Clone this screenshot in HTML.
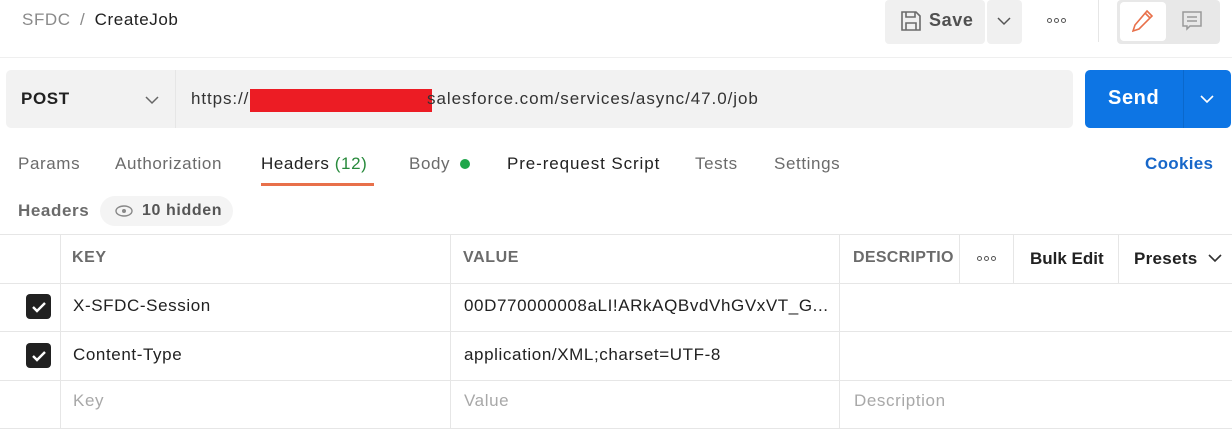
<!DOCTYPE html><html><head><style>
body{margin:0;width:1232px;height:438px;overflow:hidden;background:#fff;font-family:"Liberation Sans",sans-serif;position:relative;color:#212121}
.a{position:absolute;white-space:nowrap;letter-spacing:0.6px}
.vl{position:absolute;width:1px;background:#e6e6e6}
.hl{position:absolute;height:1px;background:#e6e6e6;left:0;width:1232px}
.cb{position:absolute;left:26px;width:25px;height:25px;background:#212121;border-radius:4px}
.dots{position:absolute;display:flex;gap:2px}
.dots i{width:5px;height:5px;border:1.3px solid #555;border-radius:50%;box-sizing:border-box}
</style></head><body>
<div class="a" style="left:22px;top:10px;font-size:17px;color:#8a8a8a">SFDC <span style="margin:0 4px">/</span> <span style="color:#212121">CreateJob</span></div>
<div class="a" style="left:885px;top:0;width:100px;height:44px;background:#f0f0f0;border-radius:4px"></div>
<svg class="a" style="left:900px;top:10px" width="22" height="22" viewBox="0 0 22 22" fill="none" stroke="#6b6b6b" stroke-width="1.6"><path d="M2 2h14l4 4v14H2z M6 2v5h9V2 M6 20v-7h10v7"/></svg>
<div class="a" style="left:929px;top:10px;font-size:18px;font-weight:bold;color:#505050">Save</div>
<div class="a" style="left:987px;top:0;width:35px;height:44px;background:#f0f0f0;border-radius:4px"></div>
<svg class="a" style="left:997px;top:16px" width="14" height="10"><path d="M1 2l6 6 6-6" fill="none" stroke="#555" stroke-width="1.5"/></svg>
<div class="dots" style="left:1047px;top:18px"><i></i><i></i><i></i></div>
<div class="vl" style="left:1098px;top:0;height:42px"></div>
<div class="a" style="left:1117px;top:0;width:103px;height:44px;background:#e8e8e8;border-radius:4px"></div>
<div class="a" style="left:1120px;top:2px;width:46px;height:39px;background:#fff;border-radius:4px"></div>
<svg class="a" style="left:1132px;top:9px" width="22" height="24" viewBox="0 0 22 24" fill="none" stroke="#e8704a" stroke-width="1.6"><path d="M15 2l5 5L7 20l-6 2 2-6z M13 4l5 5"/></svg>
<svg class="a" style="left:1181px;top:10px" width="22" height="22" viewBox="0 0 22 22" fill="none" stroke="#999" stroke-width="1.5"><path d="M2 2h18v14H9l-3 3v-3H2z M6 7h10 M6 11h10"/></svg>
<div class="hl" style="top:57px;background:#efefef"></div>
<div class="a" style="left:6px;top:70px;width:1067px;height:58px;background:#f2f2f2;border-radius:5px"></div>
<div class="vl" style="left:175px;top:70px;height:58px"></div>
<div class="a" style="left:21px;top:89px;font-size:17px;font-weight:bold">POST</div>
<svg class="a" style="left:145px;top:95px" width="14" height="10"><path d="M1 2l6 6 6-6" fill="none" stroke="#666" stroke-width="1.5"/></svg>
<div class="a" style="left:191px;top:89px;font-size:17px;color:#333;letter-spacing:0.9px">https://</div>
<div class="a" style="left:250px;top:89px;width:182px;height:23px;background:#ec1c24"></div>
<div class="a" style="left:427px;top:89px;font-size:17px;color:#333;letter-spacing:0.95px">salesforce.com/services/async/47.0/job</div>
<div class="a" style="left:1085px;top:70px;width:146px;height:58px;background:#0d75e4;border-radius:5px"></div>
<div class="vl" style="left:1183px;top:70px;height:58px;background:#0a68cc"></div>
<div class="a" style="left:1108px;top:87px;font-size:20px;font-weight:bold;color:#fff">Send</div>
<svg class="a" style="left:1200px;top:94px" width="14" height="10"><path d="M1 2l6 6 6-6" fill="none" stroke="#fff" stroke-width="1.6"/></svg>
<div class="a" style="left:18px;top:154px;font-size:17px;color:#6b6b6b">Params</div>
<div class="a" style="left:115px;top:154px;font-size:17px;color:#6b6b6b">Authorization</div>
<div class="a" style="left:261px;top:154px;font-size:17px;color:#212121">Headers <span style="color:#288a3c">(12)</span></div>
<div class="a" style="left:261px;top:183px;width:113px;height:3px;background:#e8704a"></div>
<div class="a" style="left:409px;top:154px;font-size:17px;color:#6b6b6b">Body</div>
<div class="a" style="left:460px;top:159px;width:10px;height:10px;border-radius:5px;background:#1fa64a"></div>
<div class="a" style="left:507px;top:154px;font-size:17px;color:#212121;letter-spacing:0.9px">Pre-request Script</div>
<div class="a" style="left:695px;top:154px;font-size:17px;color:#6b6b6b">Tests</div>
<div class="a" style="left:774px;top:154px;font-size:17px;color:#6b6b6b">Settings</div>
<div class="a" style="left:1145px;top:154px;font-size:17px;font-weight:bold;color:#1767c9;letter-spacing:0.3px">Cookies</div>
<div class="a" style="left:18px;top:201px;font-size:17px;font-weight:bold;color:#6b6b6b">Headers</div>
<div class="a" style="left:100px;top:196px;width:133px;height:30px;background:#f4f4f4;border-radius:15px"></div>
<svg class="a" style="left:115px;top:205px" width="18" height="12"><ellipse cx="9" cy="6" rx="8" ry="5" fill="none" stroke="#888" stroke-width="1.4"/><circle cx="9" cy="6" r="2" fill="#888"/></svg>
<div class="a" style="left:142px;top:202px;font-size:16px;font-weight:bold;color:#555">10 hidden</div>
<div class="hl" style="top:234px"></div><div class="hl" style="top:283px"></div><div class="hl" style="top:331px"></div><div class="hl" style="top:380px"></div><div class="hl" style="top:428px"></div>
<div class="vl" style="left:60px;top:234px;height:194px"></div>
<div class="vl" style="left:450px;top:234px;height:194px"></div>
<div class="vl" style="left:839px;top:234px;height:194px"></div>
<div class="vl" style="left:959px;top:234px;height:49px"></div>
<div class="vl" style="left:1013px;top:234px;height:49px"></div>
<div class="vl" style="left:1118px;top:234px;height:49px"></div>
<div class="a" style="left:72px;top:249px;font-size:16px;font-weight:bold;color:#6b6b6b">KEY</div>
<div class="a" style="left:463px;top:249px;font-size:16px;font-weight:bold;color:#6b6b6b">VALUE</div>
<div class="a" style="left:853px;top:249px;font-size:16px;font-weight:bold;color:#6b6b6b;letter-spacing:0.3px">DESCRIPTIO</div>
<div class="dots" style="left:977px;top:256px"><i></i><i></i><i></i></div>
<div class="a" style="left:1030px;top:249px;font-size:17px;font-weight:bold;letter-spacing:0">Bulk Edit</div>
<div class="a" style="left:1134px;top:249px;font-size:17px;font-weight:bold;letter-spacing:0.3px">Presets</div>
<svg class="a" style="left:1208px;top:253px" width="14" height="10"><path d="M1 2l6 6 6-6" fill="none" stroke="#333" stroke-width="1.6"/></svg>
<div class="cb" style="top:294px"></div><svg class="a" style="left:30px;top:298px" width="18" height="18"><path d="M3 9l4 4 8-8" fill="none" stroke="#fff" stroke-width="2.4"/></svg>
<div class="cb" style="top:343px"></div><svg class="a" style="left:30px;top:347px" width="18" height="18"><path d="M3 9l4 4 8-8" fill="none" stroke="#fff" stroke-width="2.4"/></svg>
<div class="a" style="left:73px;top:296px;font-size:17px">X-SFDC-Session</div>
<div class="a" style="left:464px;top:296px;font-size:17px">00D770000008aLI!ARkAQBvdVhGVxVT_G...</div>
<div class="a" style="left:73px;top:345px;font-size:17px">Content-Type</div>
<div class="a" style="left:464px;top:345px;font-size:17px">application/XML;charset=UTF-8</div>
<div class="a" style="left:73px;top:391px;font-size:17px;color:#a8a8a8">Key</div>
<div class="a" style="left:464px;top:391px;font-size:17px;color:#a8a8a8">Value</div>
<div class="a" style="left:854px;top:391px;font-size:17px;color:#a8a8a8">Description</div>
</body></html>
